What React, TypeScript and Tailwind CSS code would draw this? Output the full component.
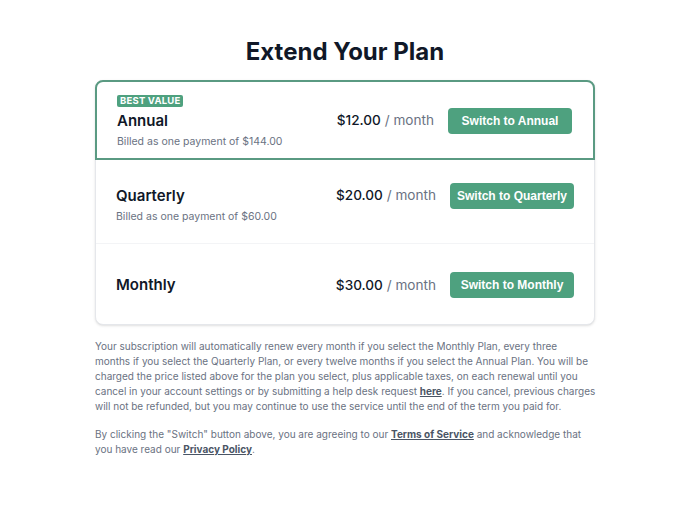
import React from 'react';

type Plan = {
  name: string;
  price: string;
  billed?: string;
  best?: boolean;
};

const plans: Plan[] = [
  { name: 'Annual', price: '$12.00', billed: 'Billed as one payment of $144.00', best: true },
  { name: 'Quarterly', price: '$20.00', billed: 'Billed as one payment of $60.00' },
  { name: 'Monthly', price: '$30.00' },
];

function PlanRow({ plan, index }: { plan: Plan; index: number }) {
  const rowClass = plan.best
    ? 'h-[80px] border-2 border-[#5a9a82] rounded-t-lg -mx-px -mt-px pl-[20px] pr-[21px] pt-[3px]'
    : index === 1
      ? 'h-[83px] px-[20px] pt-[3px]'
      : 'h-[81px] border-t border-gray-100 px-[20px] pt-[2px]';

  return (
    <div className={`flex flex-col justify-center ${rowClass}`}>
      {plan.best && (
        <div className="flex mb-px">
          <span className="bg-[#4ea17f] text-white text-[9.5px] font-bold leading-[12px] px-[3px] rounded-[2px] tracking-[0.2px]">
            BEST VALUE
          </span>
        </div>
      )}
      <div className="flex items-center h-[26px]">
        <p className="flex-1 text-[15px] font-semibold text-gray-900 leading-[20px]">{plan.name}</p>
        <div className="text-[13.6px] mr-[14px] whitespace-nowrap">
          <span className="font-medium text-gray-900">{plan.price}</span>
          <span className="text-gray-500"> / month</span>
        </div>
        <button
          className="w-[124px] h-[26px] rounded bg-[#4ea17f] text-white text-[12px] font-bold"
          style={{ fontFamily: '"Liberation Sans", Arial, sans-serif' }}
        >
          Switch to {plan.name}
        </button>
      </div>
      {plan.billed && (
        <p className="text-[10.5px] text-gray-500 leading-[14px] mt-px">{plan.billed}</p>
      )}
    </div>
  );
}

export default function App() {
  return (
    <div
      className="min-h-screen bg-white pt-[36px]"
      style={{ fontFamily: 'Inter, "Noto Sans", sans-serif' }}
    >
      <div className="w-[500px] ml-[95px]">
        <h1 className="text-center text-[24px] font-bold text-gray-900 leading-[32px] mb-[12px]">
          Extend Your Plan
        </h1>
        <div className="rounded-lg border border-gray-200 shadow-sm bg-white">
          {plans.map((p, i) => (
            <PlanRow key={p.name} plan={p} index={i} />
          ))}
        </div>
        <div className="mt-[14px] w-[510px] text-[10px] leading-[15px] text-gray-500">
          <p>
            Your subscription will automatically renew every month if you select the Monthly Plan,
            every three
            <br />
            months if you select the Quarterly Plan, or every twelve months if you select the Annual
            Plan. You will be
            <br />
            charged the price listed above for the plan you select, plus applicable taxes, on each
            renewal until you
            <br />
            cancel in your account settings or by submitting a help desk request{' '}
            <a className="font-bold underline text-gray-600">here</a>. If you cancel, previous charges
            <br />
            will not be refunded, but you may continue to use the service until the end of the term
            you paid for.
          </p>
          <p className="mt-[13px]">
            By clicking the "Switch" button above, you are agreeing to our{' '}
            <a className="font-bold underline text-gray-600">Terms of Service</a> and acknowledge that
            <br />
            you have read our <a className="font-bold underline text-gray-600">Privacy Policy</a>.
          </p>
        </div>
      </div>
    </div>
  );
}
